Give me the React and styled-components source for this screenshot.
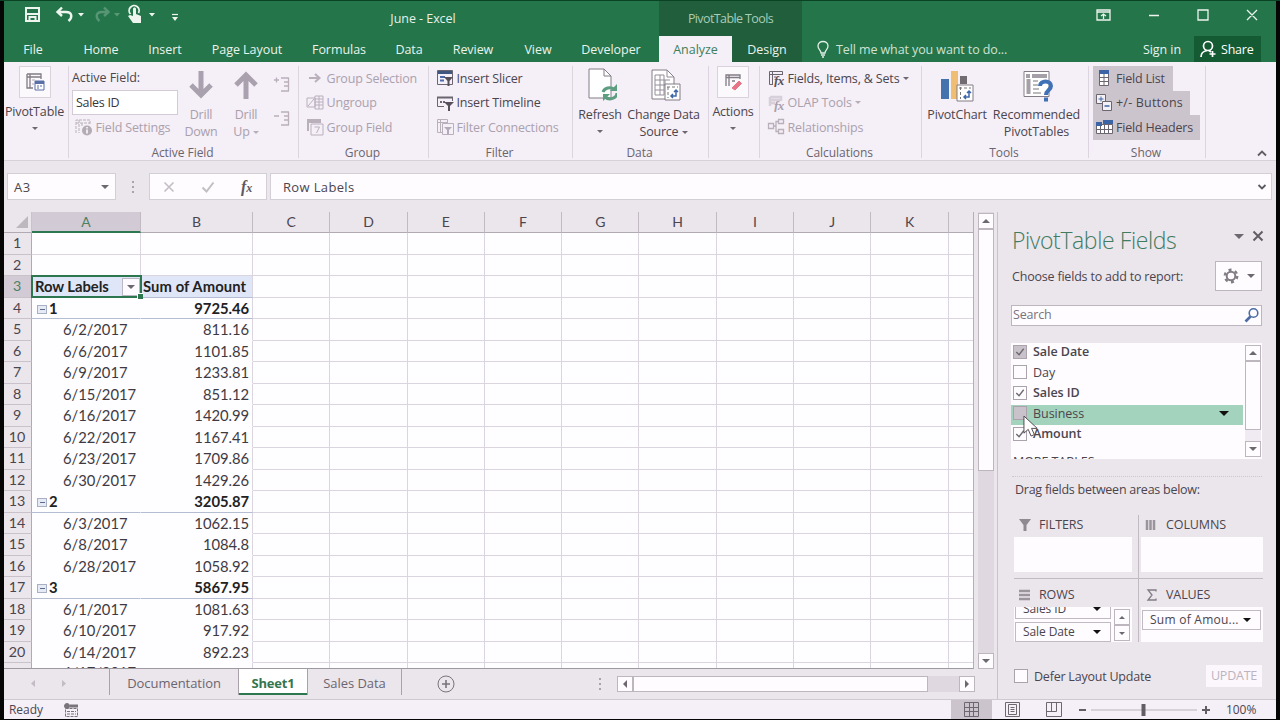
import React from "react"
import styled, { createGlobalStyle, css } from "styled-components"

const ui = `"Open Sans", "Noto Sans", sans-serif`
const cellFont = `Lato, "Open Sans", sans-serif`

const ribbonGroups = {
    group: [
        { icon: "arrow", text: "Group Selection" },
        { icon: "ungroup", text: "Ungroup" },
        { icon: "groupField", text: "Group Field" },
    ],
    filter: [
        { icon: "slicer", text: "Insert Slicer", on: true },
        { icon: "timeline", text: "Insert Timeline", on: true },
        { icon: "connections", text: "Filter Connections" },
    ],
    calc: [
        { icon: "fields", text: "Fields, Items, & Sets", on: true, caret: true },
        { icon: "olap", text: "OLAP Tools", caret: true },
        { icon: "relations", text: "Relationships" },
    ],
}

const rows = [
    [], [],
    ["Row Labels", "Sum of Amount", "head"],
    ["1", "9725.46", "total"],
    ["6/2/2017", "811.16"],
    ["6/6/2017", "1101.85"],
    ["6/9/2017", "1233.81"],
    ["6/15/2017", "851.12"],
    ["6/16/2017", "1420.99"],
    ["6/22/2017", "1167.41"],
    ["6/23/2017", "1709.86"],
    ["6/30/2017", "1429.26"],
    ["2", "3205.87", "total"],
    ["6/3/2017", "1062.15"],
    ["6/8/2017", "1084.8"],
    ["6/28/2017", "1058.92"],
    ["3", "5867.95", "total"],
    ["6/1/2017", "1081.63"],
    ["6/10/2017", "917.92"],
    ["6/14/2017", "892.23"],
    ["6/17/2017", ""],
]

const columns = ["A", "B", "C", "D", "E", "F", "G", "H", "I", "J", "K", ""]

/* Small ribbon icons, all on an 18 x 18 box */
const glyphs = {
    arrow: <path d="M3 9h10M9 5l4.500 4L9 13" strokeWidth="2" />,
    ungroup: <><path d="M1 4h8v9H1zM2 12l6-7" /><path d="M9 2h8v13H9zM9 5h8M9 8h8M9 11h8M13 2v13" /></>,
    groupField: <><path d="M2 13V2h12v3M2 4h12" strokeWidth="2" /><path d="M5 6h12v11H5zM8.500 9h5l-3 6" /></>,
    slicer: <><path d="M1.500 1.500h15v14h-15z" /><path d="M2 3.500h14" strokeWidth="3" stroke="#3f5680" /><path d="M4 8h5M4 11.500h4" stroke="#4d6cab" strokeWidth="2" /><path d="M8 8h9l-3.500 4v5h-2v-5z" fill="#55505a" stroke="none" /></>,
    timeline: <><path d="M8 12.500H1.500v-9h15V7" /><path d="M1 3.500h16" strokeWidth="2" /><path d="M4 8h6" strokeDasharray="2 1" strokeWidth="2" /><path d="M8 8h10l-4 4v5h-2v-5z" fill="#55505a" stroke="none" /></>,
    connections: <><path d="M1.500 1.500h10v13h-10zM1.500 4.500h10M4.500 1.500v13" /><path d="M6.500 5.500h11v11h-11z" fill="#f5eff7" /><path d="M8 9h8l-3 3v4h-2v-4z" fill="#b3aab7" stroke="none" /></>,
    fields: <><path d="M6 15.500H2.500v-13h13V6M2.500 5.500h13M5.500 3v12M9 8H7" /><text x="7" y="16" fontSize="13">fx</text></>,
    olap: <><path d="M3 3h11v4M3 3v9M3 6h10M3 9h5" strokeWidth="2.500" opacity=".5" /><text x="7" y="16" fontSize="13">fx</text></>,
    relations: <><path d="M1.500 5.500h5v5h-5zM11.500 1.500h5v4h-5zM11.500 11.500h5v4h-5zM6.500 8H9M11.500 3.500H9v10h2.500" strokeWidth="1.300" /></>,
    settings: <><path d="M1 15V2h14v5M1 5h14M4 2v13M7 5v4" strokeDasharray="3 1" /><circle cx="12" cy="12.500" r="5" fill="#b4abb7" stroke="none" /><path d="M12 11.500v4M12 9v1.500" stroke="#fff" strokeWidth="1.500" /></>,
    expand: <><path d="M1 4h5M3.500 1.500v5M8 2h8M11 6h5M11 10h5M8 15h8M15.500 2v13" strokeWidth="1.300" /></>,
    collapse: <><path d="M1 6h5M8 2h8M11 6h5M11 10h5M8 15h8M15.500 2v13" strokeWidth="1.300" /></>,
    fieldList: <><path d="M4.500 1.500h9v15h-9z" fill="#fff" /><path d="M4 3h10" stroke="#3c64a5" strokeWidth="4" /><path d="M4.500 8.500h9M4.500 12.500h9M9 5v11" /></>,
    buttons: <><path d="M1.500.5h9v9h-9z" fill="#f4f1f6" /><path d="M3.500 5h5M6 2.500v5" stroke="#3c64a5" /><path d="M7.500 7.500h9v9h-9z" fill="#f4f1f6" /><path d="M9.500 12h5" stroke="#3c64a5" strokeWidth="1.500" /></>,
    headers: <><path d="M1.500 6.500h16v9h-16z" fill="#fff" /><path d="M1 6h6M8 4h10" stroke="#3c64a5" strokeWidth="4" /><path d="M1.500 11.500h16M5.500 8v7M9.500 6v9M13.500 6v9" /></>,
}

function Glyph({ name, on }) {
    return (
        <SmallSvg viewBox="0 0 18 18" $on={on}>{glyphs[name]}</SmallSvg>
    )
}

function SmallButton({ icon, text, on, caret }) {
    return (
        <SmallRow $on={on}>
            <Glyph name={icon} on={on} />
            <span>{text}</span>
            {caret && <Caret $c={on ? "#6d6770" : "#b7aebb"} $s={3} />}
        </SmallRow>
    )
}

function Stack({ items }) {
    return <Column>{items.map(item => <SmallButton key={item.text} {...item} />)}</Column>
}

function Group({ width, label, children }) {
    return (
        <GroupWrap $w={width}>
            <GroupBody>{children}</GroupBody>
            <GroupLabel>{label}</GroupLabel>
        </GroupWrap>
    )
}

function TitleIcons() {
    return (
        <Quick viewBox="0 0 176 24">
            <path d="M2 5h13v13H2z" strokeWidth="2" />
            <path d="M3 11h12M5.500 18v-4h6v4" strokeWidth="2" />
            <path d="M38 4.500L33.500 9l4.500 4M33.500 9H42c6 0 7 5 2.500 9" strokeWidth="2.400" />
            <path d="M54 10h6l-3 3.500z" fill="#eef5ef" stroke="none" />
            <g opacity=".25">
                <path d="M80 4.500L84.500 9 80 13M84.500 9H78c-6 0-7 5-2.500 9" strokeWidth="2.400" />
                <path d="M90 10h6l-3 3.500z" fill="#fff" stroke="none" />
            </g>
            <path d="M106.500 11a5 5 0 1 1 8-1" strokeWidth="1.800" />
            <path d="M109 6v7l-3-1-2 1 5 7h8v-7l-5-2V6c0-2-3-2-3 0z" fill="#eef5ef" stroke="none" />
            <path d="M125 10h6l-3 3.500zM148 14h6l-3 4z" fill="#eef5ef" stroke="none" />
            <path d="M148 11.500h6" strokeWidth="1.200" />
        </Quick>
    )
}

function Ribbon() {
    return (
        <RibbonBar>
            <Group width={65}>
                <Big $w={61}>
                    <IconBox>
                        <svg width="20" height="20" viewBox="0 0 20 20" fill="none" stroke="#817b84">
                            <path d="M2 2h14v5M2 2v14h6M2 5h14M5 2v14" strokeWidth="1.300" />
                            <path d="M7 8h3M7 12h2" stroke="#aaa" />
                            <path d="M10 9h9v9h-9z" fill="#fff" stroke="#5a6fa8" />
                            <path d="M10 10.500h9" stroke="#5a6fa8" strokeWidth="3" />
                            <path d="M12 14h2M15 14h2M12 16h2" stroke="#5a6fa8" />
                        </svg>
                    </IconBox>
                    <BigText $top={5} $ls={-0.15}>PivotTable</BigText>
                    <Caret $s={3} />
                </Big>
            </Group>
            <Group width={230} label="Active Field">
                <FieldColumn>
                    <FieldName>Active Field:</FieldName>
                    <FieldInput>Sales ID</FieldInput>
                    <SmallButton icon="settings" text="Field Settings" />
                </FieldColumn>
                <Big $w={44} $off>
                    <Arrow viewBox="0 0 24 28"><path d="M12 0v24M2 14l10 10 10-10" /></Arrow>
                    <BigText $top={5}>Drill<br />Down</BigText>
                </Big>
                <Big $w={46} $off>
                    <Arrow viewBox="0 0 24 28"><path d="M12 28V4M2 14L12 4l10 10" /></Arrow>
                    <BigText $top={5}>Drill<br />Up <Caret $c="#b7aebb" $s={3} /></BigText>
                </Big>
                <Outline>
                    <Glyph name="expand" />
                    <Glyph name="collapse" />
                </Outline>
            </Group>
            <Group width={130} label="Group"><Stack items={ribbonGroups.group} /></Group>
            <Group width={144} label="Filter"><Stack items={ribbonGroups.filter} /></Group>
            <Group width={136} label="Data">
                <Big $w={54}>
                    <Art viewBox="0 0 34 36">
                        <path d="M6 3h15l7 7v22H6z" fill="#fff" stroke="#837c86" />
                        <path d="M21 3v7h7" stroke="#837c86" />
                        <path d="M20 26a7 6 0 0 1 11-3M34 27a7 6 0 0 1-12 4" stroke="#5d9d80" strokeWidth="3" />
                        <path d="M34 18v7h-7zM20 35v-7h7z" fill="#5d9d80" />
                    </Art>
                    <BigText>Refresh</BigText>
                    <Caret $s={3} />
                </Big>
                <Big $w={73}>
                    <Art viewBox="0 0 34 36">
                        <path d="M5 4h15l7 7v22H5z" fill="#fff" stroke="#837c86" />
                        <path d="M20 4v7h7M8 9h9v20H8zM8 14h15M8 19h15M8 24h9M13 9v20M18 14v6" stroke="#958e98" />
                        <path d="M18 18h15v16H18z" fill="#fff" stroke="#837c86" />
                        <path d="M20 21h11M21 21v11" stroke="#777" strokeDasharray="3 2" />
                        <path d="M24 30h5v-6M27 26l2-2 2 2M26 28l-2 2 2 2" stroke="#3d67aa" strokeWidth="1.500" />
                    </Art>
                    <BigText>Change Data<br />Source <Caret $s={3} /></BigText>
                </Big>
            </Group>
            <Group width={51}>
                <Big $w={48}>
                    <IconBox>
                        <svg width="20" height="20" viewBox="0 0 20 20" fill="none" stroke="#817b84">
                            <path d="M3 14V3h14v4M3 5.500h14M6 3v11M9 9h3" strokeWidth="1.300" />
                            <path d="M9 16l7-7 2.500 2.500L12 18z" fill="#e87488" stroke="#e87488" />
                        </svg>
                    </IconBox>
                    <BigText $top={5}>Actions</BigText>
                    <Caret $s={3} />
                </Big>
            </Group>
            <Group width={162} label="Calculations"><Stack items={ribbonGroups.calc} /></Group>
            <Group width={167} label="Tools">
                <Big $w={70}>
                    <Art viewBox="0 0 34 36">
                        <path d="M1 13h8v20H1z" fill="#4472ac" />
                        <path d="M11 5h7v28h-7z" fill="#efbd73" />
                        <path d="M20 10h7v8h-7z" fill="#716b72" />
                        <path d="M17 19h16v16H17z" fill="#fff" stroke="#837c86" />
                        <path d="M19 22h12M20.500 21v12" stroke="#777" strokeDasharray="3 2" />
                        <path d="M24 31h5v-6M27 27l2-2 2 2M26 29l-2 2 2 2" stroke="#3d67aa" strokeWidth="1.500" />
                    </Art>
                    <BigText $ls={-0.15}>PivotChart</BigText>
                </Big>
                <Big $w={89}>
                    <Art viewBox="0 0 34 36">
                        <path d="M4 5.500h25v25H4z" fill="#fff" stroke="#837c86" />
                        <path d="M6 10h4M12 10h15" stroke="#a59fa7" strokeWidth="4" />
                        <path d="M8.500 13v15" stroke="#a59fa7" strokeWidth="4" />
                        <path d="M13 15h5M13 19h5M13 23h6M13 27h8" stroke="#bbb" strokeWidth="2" />
                        <path d="M20 20c0-6 11-6 11 0 0 4-5 4-5 9M26 31.500v4" stroke="#3e71b6" strokeWidth="4" />
                    </Art>
                    <BigText $ls={-0.1}>Recommended<br />PivotTables</BigText>
                </Big>
            </Group>
            <Group width={117} label="Show">
                <Column $left={4}>
                    <Toggle $w={80}><Glyph name="fieldList" on />Field List</Toggle>
                    <Toggle $w={97}><Glyph name="buttons" on /><Wide>+/- Buttons</Wide></Toggle>
                    <Toggle $w={107}><Glyph name="headers" on />Field Headers</Toggle>
                </Column>
            </Group>
            <Collapse viewBox="0 0 12 8"><path d="M2 6.500l4-4 4 4" /></Collapse>
        </RibbonBar>
    )
}

function Sheet() {
    return (
        <Grid>
            <HeaderRow>
                <Corner><svg width="12" height="12"><path d="M12 0v12H0z" fill="#bdb7be" /></svg></Corner>
                {columns.map((c, i) => <ColHead key={i} $on={c === "A"}>{c}</ColHead>)}
            </HeaderRow>
            {rows.map(([label, amount, kind], i) => (
                <SheetRow key={i} $h={i % 2 ? 21 : 22}>
                    <RowHead $on={i === 2}>{i < 20 ? i + 1 : ""}</RowHead>
                    <Cell $pivot={i > 1} $kind={kind} $indent={!kind && label}>
                        {kind === "total" && <Minus />}
                        {label}
                        {kind === "head" && <Selection><DropBtn><Caret $s={4} /></DropBtn><Handle /></Selection>}
                    </Cell>
                    <Cell $pivot={i > 1} $kind={kind} $right={kind !== "head"} $last>{amount}</Cell>
                    {columns.slice(2).map((c, j) => <Cell key={j} />)}
                </SheetRow>
            ))}
        </Grid>
    )
}

function Check({ on, gray }) {
    return (
        <Box $gray={gray}>
            {on && <svg width="12" height="12" viewBox="0 0 13 13"><path d="M2.500 6.500l3 3 5-6.500" fill="none" stroke="#6f6972" strokeWidth="1.500" /></svg>}
        </Box>
    )
}

function Pane() {
    return (
        <PaneWrap>
            <PaneTitle>
                <h2>PivotTable Fields</h2>
                <Caret $s={5} />
                <svg width="12" height="12" viewBox="0 0 12 12"><path d="M1.500 1.500l9 9M10.500 1.500l-9 9" stroke="#625c65" strokeWidth="2" /></svg>
            </PaneTitle>
            <Choose>
                <span>Choose fields to add to report:</span>
                <GearBox>
                    <svg width="16" height="16" viewBox="0 0 16 16" fill="none" stroke="#827c85">
                        <circle cx="8" cy="8" r="4.300" strokeWidth="2" />
                        <circle cx="8" cy="8" r="6.200" strokeWidth="2.400" strokeDasharray="3 3.500" />
                    </svg>
                    <Caret $s={4} />
                </GearBox>
            </Choose>
            <Search>
                Search
                <svg width="16" height="16" viewBox="0 0 16 16" fill="none" stroke="#4c6ca5"><circle cx="9.500" cy="6" r="4.300" strokeWidth="1.600" /><path d="M6.500 9.500l-5 5" strokeWidth="2.600" /></svg>
            </Search>
            <FieldList>
                <Fields>
                    <Field $bold><Check on gray />Sale Date</Field>
                    <Field><Check />Day</Field>
                    <Field $bold><Check on />Sales ID</Field>
                    <Field $hot><Check gray />Business<Caret $c="#111" $s={5} /></Field>
                    <Field $bold><Check on />Amount</Field>
                    <More>MORE TABLES...</More>
                </Fields>
                <FieldScroll>
                    <ScrollBtn><Caret $s={4} $up /></ScrollBtn>
                    <Thumb $h={69} />
                    <ScrollBtn><Caret $s={4} /></ScrollBtn>
                </FieldScroll>
                <Pointer viewBox="0 0 20 24"><path d="M1 1v18l4.500-4 3 7 3.500-1.500-3-6.500h6z" /></Pointer>
            </FieldList>
            <Drag>Drag fields between areas below:</Drag>
            <Areas>
                <Area>
                    <AreaHead><svg width="14" height="14"><path d="M1 1h12L8.500 7v6h-3V7z" fill="#8f8992" /></svg>FILTERS</AreaHead>
                    <Drop />
                </Area>
                <Area $right>
                    <AreaHead><svg width="14" height="14"><path d="M2 2v10M5.500 2v10M9 2v10" stroke="#9a949c" strokeWidth="2.500" /></svg>COLUMNS</AreaHead>
                    <Drop />
                </Area>
                <Area $low>
                    <AreaHead><svg width="14" height="14"><path d="M1 3h11M1 7h11M1 11h11" stroke="#9a949c" strokeWidth="2.500" /></svg>ROWS</AreaHead>
                    <Drop $split>
                        <Pills>
                            <Pill $cut>Sales ID<Caret $c="#111" $s={4} /></Pill>
                            <Pill>Sale Date<Caret $c="#111" $s={4} /></Pill>
                        </Pills>
                        <MiniScroll>
                            <ScrollBtn><Caret $s={3} $up /></ScrollBtn>
                            <ScrollBtn><Caret $s={3} /></ScrollBtn>
                        </MiniScroll>
                    </Drop>
                </Area>
                <Area $right $low>
                    <AreaHead><svg width="14" height="14"><path d="M11 3.500V2H3l4 5-4 5h8v-1.500" fill="none" stroke="#827c85" strokeWidth="1.300" /></svg>VALUES</AreaHead>
                    <Drop>
                        <Pill $wide>Sum of Amou...<Caret $c="#111" $s={4} /></Pill>
                    </Drop>
                </Area>
            </Areas>
            <Defer><Check /><span>Defer Layout Update</span><Update>UPDATE</Update></Defer>
        </PaneWrap>
    )
}

export default function App() {
    return (
        <Screen>
            <Global />
            <TitleBar>
                <TitleIcons />
                <DocTitle>June - Excel</DocTitle>
                <Context>PivotTable Tools</Context>
                <WindowIcons viewBox="0 0 180 20">
                    <path d="M11 5h13v10H11zM11 7h13M17.500 14V9M15 11l2.500-2 2.500 2" />
                    <path d="M63 10.500h10M112 5h10v10h-10zM161 5l10 10M171 5l-10 10" />
                </WindowIcons>
            </TitleBar>
            <Tabs>
                <Tab>File</Tab><Tab>Home</Tab><Tab>Insert</Tab><Tab>Page Layout</Tab>
                <Tab>Formulas</Tab><Tab>Data</Tab><Tab>Review</Tab><Tab>View</Tab><Tab>Developer</Tab>
                <span />
                <Tab $active>Analyze</Tab><Tab $ctx>Design</Tab>
                <Tell>
                    <svg width="14" height="18" viewBox="0 0 14 18" fill="none" stroke="#e4efe7" strokeWidth="1.300"><path d="M5 13c0-3-3-3.500-3-7 0-6 10-6 10 0 0 3.500-3 4-3 7zM5 15h4M6 17h2" /></svg>
                    Tell me what you want to do...
                </Tell>
                <Tab>Sign in</Tab>
                <Share>
                    <svg width="17" height="18" viewBox="0 0 17 18" fill="none" stroke="#fff" strokeWidth="1.700"><circle cx="8" cy="6" r="4.500" /><path d="M1 17c0-4 3-6 6-6.500M9 10.500l2 1.500M12.500 11v6M9.500 14h6" /></svg>
                    Share
                </Share>
            </Tabs>
            <Ribbon />
            <FormulaBar>
                <NameBox>A3<Caret $s={4} /></NameBox>
                <Dots><i /><i /><i /></Dots>
                <FxBox>
                    <svg width="12" height="12" viewBox="0 0 12 12"><path d="M1.500 1.500l9 9M10.500 1.500l-9 9" stroke="#c3bdc4" strokeWidth="1.600" /></svg>
                    <svg width="14" height="12" viewBox="0 0 14 12"><path d="M1.500 6.500l4 4 7-9" fill="none" stroke="#c3bdc4" strokeWidth="2" /></svg>
                    <Fx>f<small>x</small></Fx>
                </FxBox>
                <Formula>
                    Row Labels
                    <svg width="10" height="8" viewBox="0 0 10 8"><path d="M1.500 2l3.500 3.500L8.500 2" fill="none" stroke="#5e5860" strokeWidth="1.800" /></svg>
                </Formula>
            </FormulaBar>
            <Main>
                <Left>
                    <SheetArea>
                        <Sheet />
                        <VScroll>
                            <ScrollBtn><Caret $s={4} $up /></ScrollBtn>
                            <Thumb $h={242} />
                            <ScrollBtn><Caret $s={4} /></ScrollBtn>
                        </VScroll>
                    </SheetArea>
                    <SheetTabs>
                        <Nav viewBox="0 0 40 10"><path d="M6 1v7L2 4.500zM33 1v7l4-3.500z" /></Nav>
                        <SheetTab $w={129} $edge>Documentation</SheetTab>
                        <SheetTab $w={70} $active>Sheet1</SheetTab>
                        <SheetTab $w={94} $ruled>Sales Data</SheetTab>
                        <Plus viewBox="0 0 18 18"><circle cx="9" cy="9" r="8" /><path d="M9 5v8M5 9h8" strokeWidth="1.600" /></Plus>
                        <Dots $push><i /><i /><i /></Dots>
                        <HScroll>
                            <ScrollBtn><Caret $s={4} $dir={90} /></ScrollBtn>
                            <HThumb />
                            <ScrollBtn><Caret $s={4} $dir={-90} /></ScrollBtn>
                        </HScroll>
                    </SheetTabs>
                </Left>
                <Pane />
            </Main>
            <Status>
                <Ready>Ready</Ready>
                <svg width="14" height="14" viewBox="0 0 14 14" fill="none" stroke="#79737b"><path d="M1.500 13.500v-8h12v8zM3 8.500h9M3 11h9" strokeDasharray="3 1" /><path d="M6 3h8" strokeWidth="3" /><circle cx="3" cy="3" r="2.500" fill="#79737b" /></svg>
                <View $active><svg width="15" height="15" viewBox="0 0 15 15"><path d="M.5.5h14v14H.5zM.5 5.500h14M.5 9.500h14M5.500.5v14M9.500.5v14" /></svg></View>
                <View><svg width="15" height="15" viewBox="0 0 15 15"><path d="M.5.5h14v14H.5zM3.500 2.500h8v10h-8zM5.500 5.500h4M5.500 7.500h4M5.500 9.500h4" /></svg></View>
                <View><svg width="16" height="15" viewBox="0 0 16 15"><path d="M.5 14.500V.5h15v14zM.5 9.500h10v-9M5.500.5v9" /></svg></View>
                <Zoom viewBox="0 0 134 16">
                    <path d="M3 8h7M126 8h8M130 4v8" strokeWidth="2" />
                    <path d="M15 8h106" stroke="#b9b3bb" />
                    <path d="M67.500 2v12" strokeWidth="4" />
                </Zoom>
                <span>100%</span>
            </Status>
        </Screen>
    )
}

const Global = createGlobalStyle`
    * { box-sizing: border-box; }
    body { margin: 0; overflow: hidden; background: #000; }
    h2 { margin: 0; }
    svg { flex: none; display: block; }
`

const Screen = styled.div`
    width: 1280px;
    height: 720px;
    padding: 0 4px 1px;
    border-top: 1px solid #0a4224;
    background: #060506;
    display: flex;
    flex-direction: column;
    font: 12.5px ${ui};
    letter-spacing: -0.05px;
    color: #4b454e;
    white-space: nowrap;
`

const Caret = styled.i`
    display: inline-block;
    flex: none;
    vertical-align: middle;
    border: ${p => p.$s}px solid transparent;
    border-top-color: ${p => p.$c || "#6d6770"};
    border-bottom: 0;
    ${p => p.$up && "transform: rotate(180deg);"}
    ${p => p.$dir && `transform: rotate(${p.$dir}deg);`}
`

/* Title bar and tabs */
const TitleBar = styled.div`
    height: 35px;
    display: flex;
    background: #24754a;
    color: #e6f1e9;
`
const Quick = styled.svg`
    width: 176px;
    height: 24px;
    margin: 2px 0 0 20px;
    fill: none;
    stroke: #eef5ef;
`
const DocTitle = styled.div`
    width: 446px;
    text-align: center;
    line-height: 36px;
`
const Context = styled.div`
    width: 143px;
    margin-left: 13px;
    background: #215e3c;
    color: #a9ccb5;
    text-align: center;
    line-height: 36px;
    letter-spacing: -0.6px;
`
const WindowIcons = styled.svg`
    width: 180px;
    height: 20px;
    margin: 4px 10px 0 auto;
    fill: none;
    stroke: #edf4ee;
    stroke-width: 1.3;
`
const Tabs = styled.div`
    height: 26px;
    display: grid;
    grid-template-columns: 58px 78px 50px 114px 70px 70px 58px 72px 74px 11px 73px 70px 328px 64px 67px;
    background: #24754a;
`
const Tab = styled.div`
    text-align: center;
    line-height: 26px;
    padding-top: 1px;
    height: 26px;
    color: ${p => p.$active ? "#3c805c" : "#eaf3ec"};
    background: ${p => p.$active ? "#f5eff7" : p.$ctx ? "#215e3c" : "none"};
`
const Tell = styled.div`
    display: flex;
    align-items: center;
    gap: 6px;
    padding-left: 14px;
    color: #cfe2d5;
    letter-spacing: -0.1px;
`
const Share = styled.div`
    display: flex;
    align-items: center;
    gap: 4px;
    padding-left: 6px;
    color: #fff;
    background: #145a32;
    letter-spacing: -0.2px;
`

/* Ribbon */
const RibbonBar = styled.div`
    height: 99px;
    display: flex;
    background: #f5eff7;
    border-bottom: 1px solid #d8d1da;
`
const GroupWrap = styled.div`
    width: ${p => p.$w}px;
    flex: none;
    height: 92px;
    margin-top: 4px;
    border-right: 1px solid #dcd4df;
`
const GroupBody = styled.div`
    height: 78px;
    display: flex;
`
const GroupLabel = styled.div`
    line-height: 17px;
    padding-right: 2px;
    text-align: center;
    font-size: 12px;
    color: #6b656e;
`
const Column = styled.div`
    padding-left: ${p => p.$left ?? 7}px;
    display: flex;
    flex-direction: column;
`
const SmallRow = styled.div`
    height: 24.5px;
    display: flex;
    align-items: center;
    gap: 2.5px;
    letter-spacing: -0.17px;
    color: ${p => p.$on ? "#4b454e" : "#aaa1ae"};

    ${Caret} { margin-left: 1px; }
`
const SmallSvg = styled.svg`
    width: 18px;
    height: 18px;
    fill: none;
    stroke: ${p => p.$on ? "#6b6570" : "#b9b0bc"};

    text {
        font-family: "Liberation Serif", serif;
        font-style: italic;
        font-weight: 700;
        letter-spacing: -0.5px;
        stroke: none;
        fill: ${p => p.$on ? "#57515a" : "#a9a0ac"};
    }
`
const FieldColumn = styled.div`
    width: 110px;
    padding-left: 3px;

    ${SmallRow} { padding-left: 3px; letter-spacing: -0.15px; }
`
const FieldName = styled.div`
    line-height: 24px;
`
const FieldInput = styled.div`
    width: 106px;
    height: 25px;
    padding-left: 3px;
    line-height: 23px;
    letter-spacing: -0.3px;
    border: 1px solid #d3ccd6;
    background: #fff;
    color: #3a363c;
`
const Big = styled.div`
    width: ${p => p.$w}px;
    display: flex;
    flex-direction: column;
    align-items: center;
    color: ${p => p.$off ? "#a9a0ac" : "#4b454e"};
`
const BigText = styled.div`
    margin-top: ${p => p.$top || 0}px;
    line-height: 17px;
    text-align: center;
    letter-spacing: ${p => p.$ls || -0.2}px;

    & + ${Caret} { margin-top: 7px; }
`
const IconBox = styled.div`
    width: 32px;
    height: 32px;
    display: grid;
    place-items: center;
    background: #fcf9fd;
    border: 1px solid #d9d1dc;
`
const Arrow = styled.svg`
    width: 24px;
    height: 28px;
    margin: 5px 0 2px;
    fill: none;
    stroke: #aaa1ae;
    stroke-width: 5;
`
const Art = styled.svg`
    width: 34px;
    height: 36px;
    margin: 0 0 4px;
    fill: none;
`
const Outline = styled.div`
    padding: 10px 0 0 4px;
    display: flex;
    flex-direction: column;
    gap: 16px;
`
const Toggle = styled.div`
    width: ${p => p.$w}px;
    height: 24.5px;
    display: flex;
    align-items: center;
    gap: 3px;
    padding-left: 2px;
    background: #ccc4cd;
    letter-spacing: -0.2px;
`
const Wide = styled.span`
    letter-spacing: 0.2px;
`
const Collapse = styled.svg`
    width: 12px;
    height: 8px;
    margin: 87px 0 0 50px;
    fill: none;
    stroke: #625c65;
    stroke-width: 1.8;
`

/* Formula bar */
const FormulaBar = styled.div`
    height: 51px;
    padding: 12px 4px 12px 3px;
    display: flex;
    background: #ebe5ec;
    font-size: 13px;
`
const field = css`
    height: 27px;
    display: flex;
    align-items: center;
    background: #fefcff;
    border: 1px solid #d4ced6;
`
const NameBox = styled.div`
    ${field}
    width: 109px;
    justify-content: space-between;
    padding: 0 6px;
    letter-spacing: 0.6px;
`
const Dots = styled.div`
    width: 33px;
    display: flex;
    flex-direction: column;
    align-items: center;
    justify-content: center;
    gap: 3px;
    ${p => p.$push && "margin-left: 128px;"}

    i {
        width: 2px;
        height: 2px;
        background: #aaa3ac;
    }
`
const FxBox = styled.div`
    ${field}
    width: 118px;
    gap: 26px;
    padding-left: 13px;
`
const Fx = styled.span`
    font: italic 700 16px "Liberation Serif", serif;
    color: #5e5860;
    small { font-size: 12px; }
`
const Formula = styled.div`
    ${field}
    flex: 1;
    margin-left: 3px;
    justify-content: space-between;
    padding: 0 4px 0 12px;
    letter-spacing: 0.35px;
`

/* Sheet */
const Main = styled.div`
    height: 487px;
    display: flex;
    background: #ebe5ec;
`
const Left = styled.div`
    width: 994px;
    flex: none;
    border-right: 1px solid #c9c2cb;
`
const SheetArea = styled.div`
    height: 457px;
    display: flex;
    gap: 4px;
`
const Grid = styled.div`
    width: 970px;
    height: 457px;
    overflow: hidden;
    border-right: 1px solid #b5aeb7;
    border-bottom: 1px solid #9e98a0;
`
const cols = "28px 109px 112px repeat(9, 77.3px) 40px"
const HeaderRow = styled.div`
    display: grid;
    grid-template-columns: ${cols};
    height: 21px;
`
const Corner = styled.div`
    display: grid;
    place-items: end;
    padding: 0 3px 4px;
    border-bottom: 1px solid #b1aab3;
    border-right: 1px solid #c9c2cb;
`
const ColHead = styled.div`
    text-align: center;
    font: 14px/19px ${cellFont};
    color: ${p => p.$on ? "#4c8263" : "#4b454e"};
    background: ${p => p.$on ? "#d2cad4" : "none"};
    border-right: 1px solid #c1bac3;
    border-bottom: ${p => p.$on ? "2px solid #2c7650" : "1px solid #b1aab3"};
`
const RowHead = styled.div`
    text-align: center;
    padding-right: 1px;
    font: 14.3px/20px ${cellFont};
    color: ${p => p.$on ? "#4c8263" : "#4b454e"};
    background: ${p => p.$on ? "#d2cad4" : "#ebe5ec"};
    border-right: 1px solid #b1aab3;
    border-bottom: 1px solid #c9c2cb;
`
const Cell = styled.div`
    position: relative;
    padding: 0 3px 0 ${p => p.$indent ? 31 : 3}px;
    text-align: ${p => p.$right ? "right" : "left"};
    font: ${p => p.$kind ? 700 : 400} 14.8px/20px ${cellFont};
    color: ${p => p.$kind ? "#222" : "#3f3a42"};
    background: ${p => p.$kind === "head" ? "#dfe6f7" : "#fefdff"};
    border-right: 1px solid ${p => p.$pivot && !p.$last ? "transparent" : "#dad5de"};
    border-bottom: 1px solid ${p => p.$kind ? "#b4bdd2" : p.$pivot ? "transparent" : "#dad5de"};
    ${p => p.$kind === "head" && p.$last && "padding-left: 2px; letter-spacing: 0.08px;"}
`
const SheetRow = styled.div`
    display: grid;
    grid-template-columns: ${cols};
    height: ${p => p.$h}px;

    /* only the tops of the digits show above the grid's bottom edge */
    &:last-child ${Cell} { line-height: 19px; }
`
const Minus = styled.i`
    display: inline-block;
    width: 10px;
    height: 9px;
    margin: 0 2px 2px 2px;
    vertical-align: middle;
    border: 1px solid #a9b0c4;
    background: linear-gradient(#5c6b92, #5c6b92) center / 5px 1px no-repeat #e6eaf5;
`
/* Cell cursor lies over the neighbouring borders */
const Selection = styled.div`
    position: absolute;
    inset: -1px -2px -1px -1px;
    z-index: 1;
    border: 2px solid #2c7650;
`
const DropBtn = styled.div`
    position: absolute;
    right: 0;
    top: 1px;
    width: 18px;
    height: 18px;
    display: grid;
    place-items: center;
    background: #fdfbff;
    border: 1px solid #bcb7c4;
`
const Handle = styled.div`
    position: absolute;
    right: -3px;
    bottom: -3px;
    width: 6px;
    height: 6px;
    background: #2c7650;
    border: 1px solid #fff;
    border-width: 1px 0 0 1px;
`
const ScrollBtn = styled.div`
    width: 16px;
    height: 16px;
    flex: none;
    display: grid;
    place-items: center;
    background: #fefcff;
    border: 1px solid #bdb6bf;
`
const Thumb = styled.div`
    height: ${p => p.$h}px;
    background: #fefcff;
    border: 1px solid #bdb6bf;
`
const VScroll = styled.div`
    width: 16px;
    padding-top: 1px;
    display: flex;
    flex-direction: column;
    background: #dfd8e1;

    ${ScrollBtn}:last-child { margin-top: auto; }
`
const SheetTabs = styled.div`
    height: 30px;
    display: flex;
    font-size: 13px;
    color: #6b656e;
`
const Nav = styled.svg`
    width: 40px;
    height: 10px;
    margin: 10px 37px 0 25px;
    fill: #c3bcc5;
`
const SheetTab = styled.div`
    width: ${p => p.$w}px;
    height: 26px;
    line-height: 28px;
    text-align: center;
    ${p => p.$edge && "border-left: 1px solid #a9a2ab; margin-left: 3px;"}
    ${p => p.$ruled && "border-right: 1px solid #a9a2ab;"}
    ${p => p.$active && css`
        font-weight: 700;
        letter-spacing: -0.2px;
        color: #35754f;
        background: #fff;
        border: solid #a9a2ab;
        border-width: 0 1px;
        box-shadow: inset 0 -2px #2c7650;
    `}
`
const Plus = styled.svg`
    width: 18px;
    height: 18px;
    margin: 6px 0 0 35px;
    fill: none;
    stroke: #79737b;
`
const HScroll = styled.div`
    width: 358px;
    height: 16px;
    margin: 7px 0 0 1px;
    display: flex;
    background: #dfd8e1;

    ${ScrollBtn}:last-child { margin-left: auto; }
`
const HThumb = styled.div`
    width: 295px;
    background: #fefcff;
    border: 1px solid #bdb6bf;
`

/* Field pane */
const PaneWrap = styled.div`
    flex: 1;
    min-width: 0;
    padding: 9px 14px 0 14px;
`
const PaneTitle = styled.div`
    height: 38px;
    display: flex;
    align-items: center;
    margin-bottom: 2px;

    h2 {
        width: 222px;
        flex: none;
        font-size: 23px;
        font-weight: 300;
        line-height: 34px;
        color: #3f7c60;
        letter-spacing: -0.4px;
    }
    ${Caret} { margin: -8px 8px 0 0; }
    svg { margin-top: -8px; }
`
const Choose = styled.div`
    height: 30px;
    display: flex;
    justify-content: space-between;
    align-items: center;
    letter-spacing: -0.2px;
`
const GearBox = styled.div`
    width: 47px;
    height: 30px;
    display: flex;
    align-items: center;
    justify-content: center;
    gap: 8px;
    background: #fefcff;
    border: 1px solid #bdb6bf;
`
const Search = styled.div`
    height: 21px;
    margin: 14px 0 0 -1px;
    padding: 0 1px 1px;
    display: flex;
    align-items: center;
    justify-content: space-between;
    background: #fefcff;
    border: 1px solid #bdb6bf;
    color: #79737b;
    line-height: 18px;
    letter-spacing: -0.2px;
`
const FieldList = styled.div`
    position: relative;
    height: 116px;
    margin: 17px 0 0 -1px;
    display: flex;
    background: #fefcff;
`
const Fields = styled.div`
    width: 232px;
    height: 116px;
    overflow: hidden;
`
const Field = styled.div`
    height: 20.5px;
    padding: 0 14px 3px 2px;
    display: flex;
    align-items: center;
    gap: 6px;
    font-weight: ${p => p.$bold ? 600 : 400};
    background: ${p => p.$hot ? "#a4d3bd" : "none"};

    ${Caret} { margin-left: auto; }
`
const More = styled.div`
    margin: 9px 0 0 2px;
    line-height: 14px;
`
const Box = styled.i`
    width: 14px;
    height: 14px;
    flex: none;
    background: ${p => p.$gray ? "#c9c2cb" : "#fefcff"};
    border: 1px solid #aaa3ac;
`
const FieldScroll = styled.div`
    width: 16px;
    height: 112px;
    margin: 2px 0 0 2px;
    display: flex;
    flex-direction: column;
    background: #f0ebf2;

    ${ScrollBtn}:last-child { margin-top: auto; }
`
const Pointer = styled.svg`
    position: absolute;
    left: 12px;
    top: 72px;
    width: 19px;
    height: 23px;
    fill: #fff;
    stroke: #4b454e;
`
const Drag = styled.div`
    height: 35px;
    margin: 17px 0 0;
    padding: 3px 0 0 3px;
    line-height: 20px;
    letter-spacing: -0.25px;
    border-top: 1px dotted #cdc6cf;
`
const Areas = styled.div`
    width: 249px;
    margin: 4px 0 0 2px;
    display: grid;
    grid-template-columns: 124px 125px;
    grid-template-rows: 63px 64px;
`
const Area = styled.div`
    padding: ${p => p.$low ? "6px" : "0"} ${p => p.$right ? 0 : 6}px 0 ${p => p.$right ? 2 : 0}px;
    border-left: ${p => p.$right ? "1px solid #c1bac3" : "0"};
    border-top: ${p => p.$low ? "1px solid #c1bac3" : "0"};
`
const AreaHead = styled.div`
    height: 22px;
    display: flex;
    align-items: center;
    gap: 7px;
    padding: 0 0 3px 4px;
    letter-spacing: -0.1px;
`
const Drop = styled.div`
    height: 35px;
    overflow: hidden;
    background: #fefcff;
    display: ${p => p.$split ? "flex" : "block"};
`
const Pills = styled.div`
    width: 98px;
`
const Pill = styled.div`
    width: ${p => p.$wide ? 119 : 96}px;
    height: 20px;
    line-height: 14px;
    margin: ${p => p.$cut ? "-8px 0 3px 1px" : "3px 0 0 1px"};
    padding: 0 9px 0 7px;
    display: flex;
    align-items: center;
    justify-content: space-between;
    font-size: 12px;
    letter-spacing: ${p => p.$wide ? 0.25 : -0.1}px;
    background: #fefcff;
    border: 1px solid #c1bac3;
`
const MiniScroll = styled.div`
    padding: 2px 0 0 2px;
`
const Defer = styled.div`
    height: 22px;
    margin: 23px 0 0 2px;
    display: flex;
    align-items: center;
    gap: 6px;
    letter-spacing: -0.22px;
`
const Update = styled.div`
    width: 56px;
    margin-left: auto;
    line-height: 22px;
    text-align: center;
    color: #bbb4bd;
    background: #fbf7fc;
`

/* Status bar */
const Status = styled.div`
    height: 20px;
    display: flex;
    align-items: center;
    background: #f5eff7;
    border-top: 1px solid #cfc8d1;
    font-size: 12px;
`
const Ready = styled.span`
    width: 60px;
    padding-left: 5px;
`
const View = styled.div`
    width: 41px;
    height: 19px;
    display: grid;
    place-items: center;
    background: ${p => p.$active ? "#ccc4cd" : "none"};
    ${p => p.$active && "margin-left: 873px;"}

    svg {
        fill: none;
        stroke: #6d6770;
    }
`
const Zoom = styled.svg`
    width: 134px;
    height: 16px;
    margin: 0 16px 0 2px;
    fill: none;
    stroke: #625c65;
`
